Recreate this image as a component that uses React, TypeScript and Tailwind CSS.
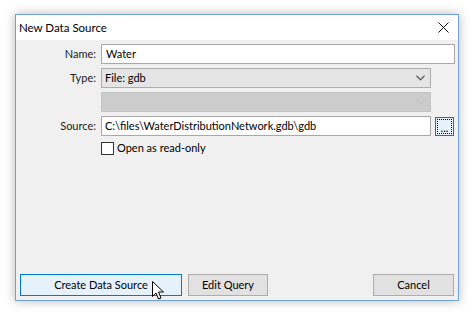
import React from 'react';

function Chevron({ disabled }: { disabled?: boolean }) {
  return (
    <svg width="9" height="6" viewBox="0 0 9 6" className="mr-[5px]">
      <path d="M0.5 0.8 L4.5 4.8 L8.5 0.8" fill="none" stroke={disabled ? '#c4c4c4' : '#606060'} strokeWidth="1.3" />
    </svg>
  );
}

function Label({ text }: { text: string }) {
  return <div className="h-[20px] flex items-center justify-end text-[11px] text-[#1b1b1b]">{text}</div>;
}

export default function App() {
  return (
    <div className="w-[474px] h-[315px] bg-white pt-[14px] pl-[15px] relative" style={{ fontFamily: 'Lato, "Noto Sans", sans-serif' }}>
      <div className="w-[444px] h-[287px] border border-[#6fa3d8] shadow-[0_0_10px_rgba(0,0,0,0.28)] flex flex-col bg-[#f0f0f0]">
        {/* title bar */}
        <div className="h-[25px] bg-white flex items-center justify-between pl-[3px] pr-[9px]">
          <span className="text-[11.5px] text-black">New Data Source</span>
          <svg width="11" height="11" viewBox="0 0 11 11">
            <path d="M0.5 0.5 L10.5 10.5 M10.5 0.5 L0.5 10.5" stroke="#111" strokeWidth="1" />
          </svg>
        </div>

        <div className="flex-1 flex flex-col pt-[4px] pl-[4px] pr-[4px] pb-[4px]">
          <div className="grid grid-cols-[76px_354px] gap-x-[5px] gap-y-[4px]">
            <Label text="Name:" />
            <div className="h-[20px] bg-white border border-[#a8a8a8] flex items-center px-[4px] text-[11px] text-black">Water</div>

            <Label text="Type:" />
            <div className="w-[330px] h-[20px] bg-[#e5e5e5] border border-[#adadad] flex items-center justify-between pl-[3px] text-[11px] text-black">
              <span>File: gdb</span>
              <Chevron />
            </div>

            <div />
            <div className="w-[330px] h-[20px] bg-[#cccccc] border border-[#c4c4c4] flex items-center justify-end">
              <Chevron disabled />
            </div>

            <Label text="Source:" />
            <div className="flex items-center gap-[4px]">
              <div className="w-[330px] h-[20px] bg-white border border-[#a8a8a8] flex items-center px-[3px] text-[11px] text-black">
                C:\files\WaterDistributionNetwork.gdb\gdb
              </div>
              <div className="w-[19px] h-[19px] border border-[#0078d7] bg-[#e5f1fb] p-[1px] mt-[1px]">
                <div className="w-full h-full border border-dotted border-black flex items-end justify-center text-[11px] leading-[10px] text-black">...</div>
              </div>
            </div>

            <div />
            <div className="flex items-center gap-[3px] mt-[1px]">
              <div className="w-[13px] h-[13px] bg-white border border-[#333]" />
              <span className="text-[11px] text-black leading-[14px]">Open as read-only</span>
            </div>
          </div>

          <div className="mt-auto flex items-center">
            <div className="relative w-[162px] h-[22px] bg-[#e5f1fb] border border-[#0078d7] flex items-center justify-center text-[11px] text-black">
              Create Data Source
              <svg width="13" height="20" viewBox="0 0 13 20" className="absolute left-[131px] top-[6px]">
                <path d="M0.5 0.5 L0.5 15.5 L4 12 L6.5 18 L9 17 L6.5 11 L11.5 11 Z" fill="white" stroke="black" strokeWidth="1" strokeLinejoin="miter" />
              </svg>
            </div>
            <div className="ml-[6px] w-[80px] h-[22px] bg-[#e1e1e1] border border-[#adadad] flex items-center justify-center text-[11px] text-black">Edit Query</div>
            <div className="ml-auto w-[81px] h-[22px] bg-[#e1e1e1] border border-[#adadad] flex items-center justify-center text-[11px] text-black">Cancel</div>
          </div>
        </div>
      </div>
    </div>
  );
}
